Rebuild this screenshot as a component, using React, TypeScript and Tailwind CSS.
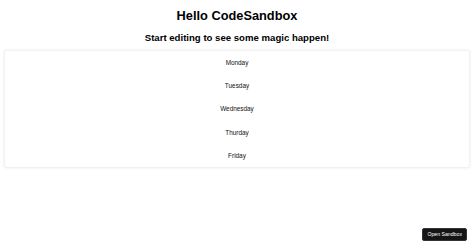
import React from "react";

const days = ["Monday", "Tuesday", "Wednesday", "Thurday", "Friday"];

export default function App() {
  return (
    <div className="relative w-[474px] h-[248px] bg-white text-black font-['Liberation_Sans',Arial,sans-serif] overflow-hidden">
      <div className="flex flex-col items-center pt-[8.6px]">
        <h1 className="text-[12.8px] leading-[14.7px] font-bold">Hello CodeSandbox</h1>
        <h2 className="mt-[8.6px] text-[9.6px] leading-[11px] font-bold">Start editing to see some magic happen!</h2>
      </div>
      <div className="mx-[4px] mt-[7px] rounded-[2px] border border-[#f1f1f1] shadow-[0_0_3px_rgba(0,0,0,0.08)] flex flex-col">
        {days.map((d) => (
          <div key={d} className="py-[8px] text-center text-[6.4px] leading-[7.3px] text-[#111]">
            {d}
          </div>
        ))}
      </div>
      <div className="absolute right-[7px] bottom-[7px] h-[13px] px-[4px] flex items-center rounded-[2px] bg-[#151515] border border-[#333] text-white text-[5.2px] leading-none">
        Open Sandbox
      </div>
    </div>
  );
}
